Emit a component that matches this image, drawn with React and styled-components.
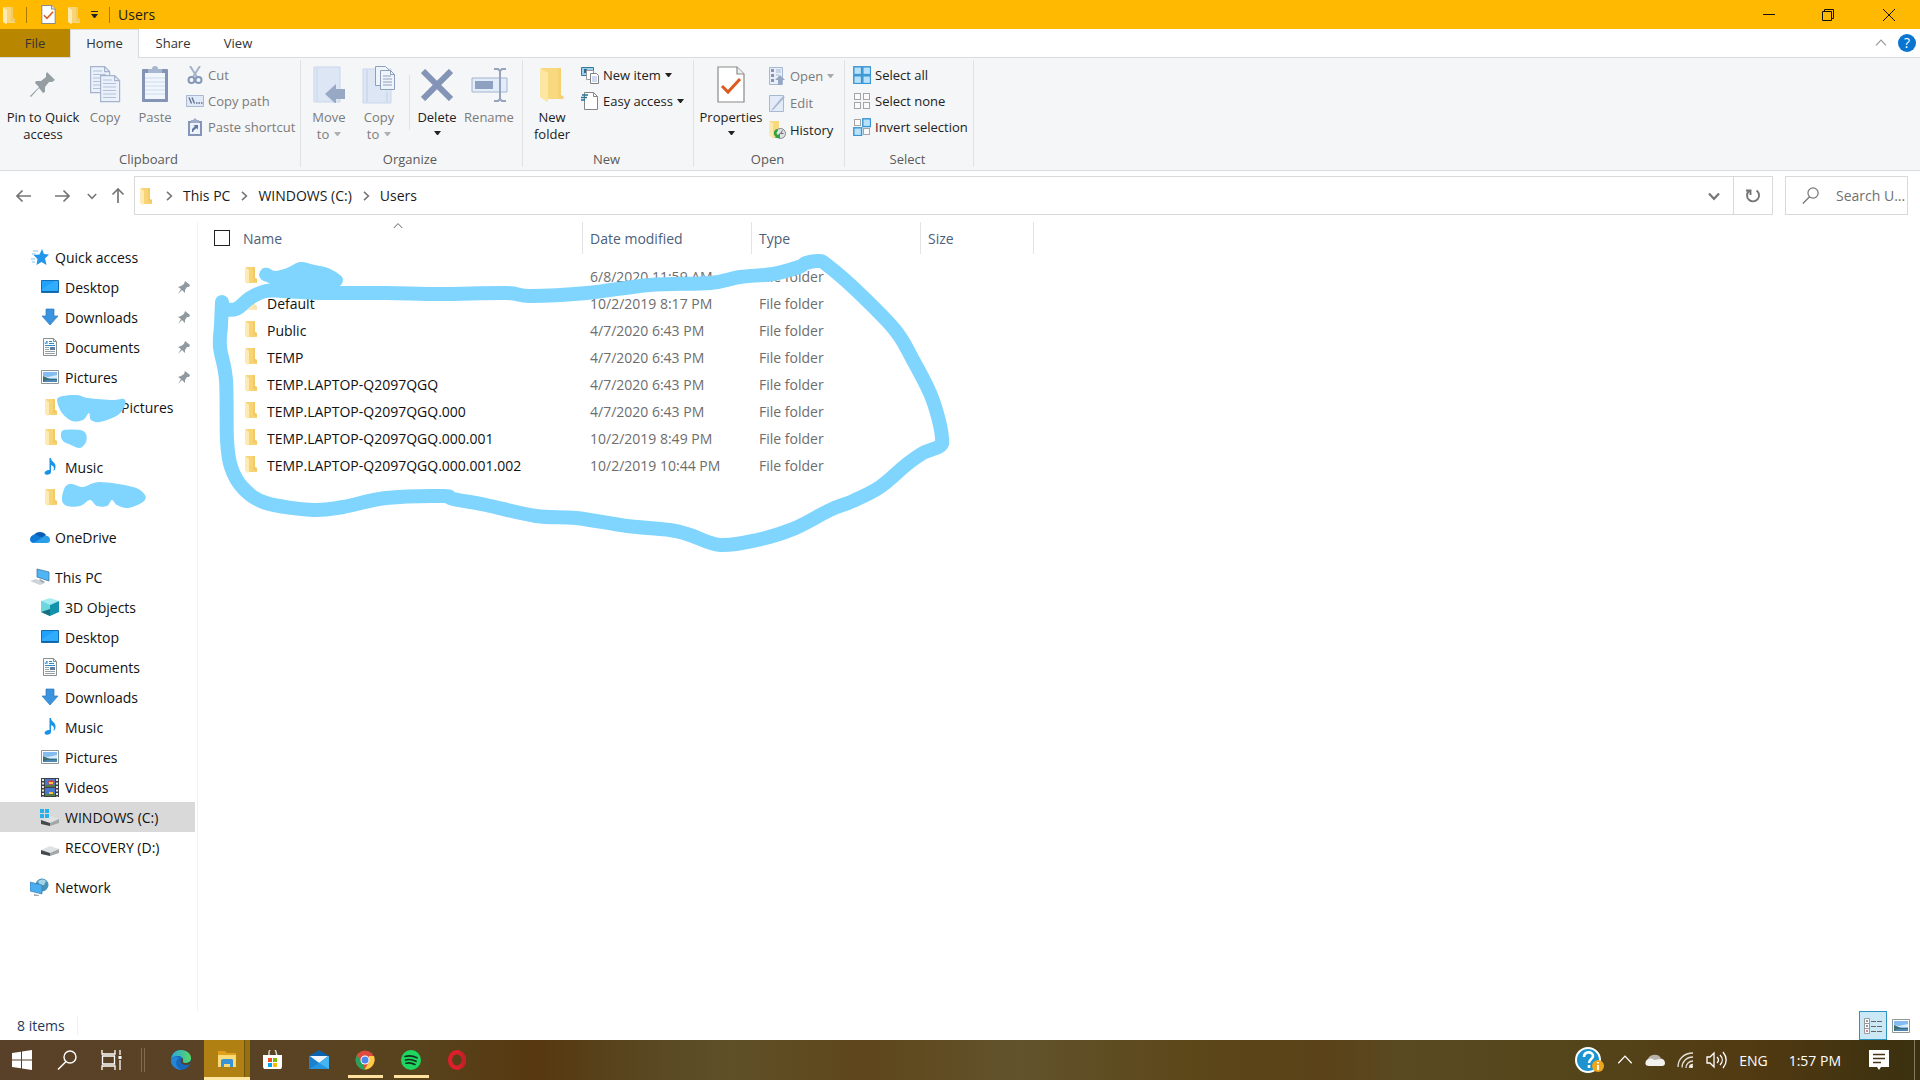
import React from 'react'
import styled, { createGlobalStyle } from 'styled-components';

const GlobalStyle = createGlobalStyle`
  * {
    box-sizing: border-box;
  }
  body {
    margin: 0;
    background: #fff;
    color: #1a1a1a;
    font-family: "Open Sans", "Noto Sans", sans-serif;
    font-size: 14px;
  }
  button, input {
    font: inherit;
    color: inherit;
    border: 0;
    padding: 0;
    background: none;
  }
  a {
    color: inherit;
    text-decoration: none;
  }
  svg {
    display: block;
    flex: none;
  }
`;

/* ---------- icons ---------- */

const Svg = ({ w, h = w, children }) => (
  <svg width={w} height={h} viewBox={`0 0 ${w} ${h}`} fill="none" aria-hidden="true">{children}</svg>
)

const Folder = () => (
  <Svg w={13} h={18}>
    <path d="M2 1h9v11l2 1v4H4z" fill="#f7d476" />
    <path d="M9 1h2v11l2 1v3l-4-1z" fill="#f2cb66" />
    <path d="M1 1l4 3v13l-1 1-3-2z" fill="#fdebb3" />
  </Svg>
)

const BigFolder = () => (
  <Svg w={26} h={36}>
    <path d="M2 1h20v27l3 2-1 2H8z" fill="#f8d97f" />
    <path d="M22 1v27l3 2-1 2h-5V1z" fill="#f3cf6c" opacity=".6" />
    <path d="M1 1l8 5v28l-1 1-7-5z" fill="#fbe6a4" />
  </Svg>
)

const Caret = ({ color = '#222' }) => (
  <Svg w={7} h={4}><path d="M0 0h7L4 4H3z" fill={color} /></Svg>
)

const Chevron = ({ dir = 'right', color = '#777', size = 10, weight = 1.6 }) => {
  const turn = { right: 0, down: 90, up: -90 }[dir]
  return (
    <Svg w={size}>
      <path
        d={`M${size * 0.3} ${size * 0.08}L${size * 0.74} ${size / 2}L${size * 0.3} ${size * 0.92}`}
        stroke={color} strokeWidth={weight} transform={`rotate(${turn} ${size / 2} ${size / 2})`}
      />
    </Svg>
  )
}

const Arrow = ({ turn = 0 }) => (
  <Svg w={16}>
    <path d="M15 8H1M6.500 2.500L1 8l5.500 5.500" stroke="#757575" strokeWidth="1.700" transform={`rotate(${turn} 8 8)`} />
  </Svg>
)

const SmallPin = () => (
  <Svg w={14} h={14}>
    <path d="M8 1l5 4-1 2-2 0-2 3v3l-3-3-4 4 3-5-3-2 3-1 3-2z" fill="#8f999f" />
  </Svg>
)

const BigPin = () => (
  <Svg w={26} h={27}>
    <path d="M17 1l8 8-3 2-3 0-4 5 0 5-2 1-4-5-8 9-1-1 9-9-4-4 1-2 5 0 5-4 0-3z" fill="#959ea2" />
  </Svg>
)

const CheckDoc = ({ big }) => (
  <svg width={big ? 28 : 15} height={big ? 37 : 19} viewBox="0 0 28 37" fill="none" aria-hidden="true">
    <path d="M1 1h19l7 7v28H1z" fill="#fff" stroke="#8a8a8a" strokeWidth={big ? 1.2 : 2} />
    <path d="M20 1v7h7" fill="#eee" stroke="#8a8a8a" strokeWidth={big ? 1.2 : 2} />
    <path d="M5 20l6 6 12-13" stroke="#dc5a1e" strokeWidth="3" />
  </svg>
)

const Sheet = ({ x, y }) => (
  <g transform={`translate(${x} ${y})`}>
    <path d="M.6.600h14l5 5v21H.6z" fill="#eaf1fa" stroke="#a5b4cd" strokeWidth="1.200" />
    <path d="M14.600.600v5h5" stroke="#a5b4cd" strokeWidth="1.200" />
    <path d="M3 5h9M3 8.500h13M3 12h13M3 15.500h13M3 19h13M3 22.500h13" stroke="#b3c1d8" />
  </g>
)

const CopyIcon = () => <Svg w={31} h={37}><Sheet x={0} y={0} /><Sheet x={10} y={9} /></Svg>

const PasteIcon = () => (
  <Svg w={28} h={37}>
    <rect x="1" y="3" width="26" height="33" rx="1" fill="#8394b5" />
    <path d="M4 7h20v26H4z" fill="#f1f5fc" />
    <path d="M4 12h20M4 16h20M4 20h20M4 24h20M4 28h20" stroke="#cfdaed" />
    <path d="M7 3h4a3 3 0 0 1 6 0h4v4H7z" fill="#a9b6cf" />
  </Svg>
)

const CutIcon = () => (
  <Svg w={18}>
    <path d="M4 0l7 11M14 0L7 11" stroke="#a5b3cb" strokeWidth="2" />
    <ellipse cx="5.500" cy="14" rx="3" ry="3" stroke="#8698b8" strokeWidth="2" />
    <ellipse cx="12.500" cy="14" rx="3" ry="3" stroke="#8698b8" strokeWidth="2" />
  </Svg>
)

const CopyPathIcon = () => (
  <Svg w={18}>
    <path d="M.5 3.500h17v11H.5z" fill="#dfe9f7" stroke="#a9b9d1" />
    <path d="M3 5.500l2.500 6M6 5.500l2.500 6" stroke="#5d708f" strokeWidth="1.300" />
    <path d="M10 11h1.500M12.500 11H14M15 11h1.500" stroke="#5d708f" strokeWidth="1.500" />
  </Svg>
)

const ShortcutIcon = () => (
  <Svg w={18}>
    <path d="M2 3h14v15H2z" fill="#8496b7" /><path d="M4 5h10v11H4z" fill="#eef3fb" />
    <path d="M5 2h2l2-2 2 2h2v3H5z" fill="#9fadc8" />
    <path d="M6 14V11l3-3-2-1h5v5l-1-2-3 2-1 2z" fill="#5f789f" />
  </Svg>
)

const MoveIcon = () => (
  <Svg w={32} h={37}>
    <path d="M1 1h26v35H1z" fill="#dce6f4" stroke="#cbd7ea" />
    <path d="M4 2v33" stroke="#cbd7ea" />
    <path d="M12 28l11-10v5h9v10h-9v5z" fill="#98a9c6" />
  </Svg>
)

const CopyToIcon = () => (
  <Svg w={34} h={38}>
    <path d="M1 3h28v34H1z" fill="#dce6f4" stroke="#cbd7ea" />
    <path d="M5 4v32M25 26v10" stroke="#c3d0e6" />
    <path d="M13.500.500h10l4 4v15h-14z" fill="#eff4fb" stroke="#8fa0be" />
    <path d="M18.500 4.500h10l4 4v15h-14z" fill="#eff4fb" stroke="#8fa0be" />
    <path d="M28.500 4.500v4h4M21 10h8M21 13h9M21 16h9M21 19h9" stroke="#8fa0be" />
  </Svg>
)

const DeleteIcon = () => (
  <Svg w={32} h={32}><path d="M2 2l28 28M30 2L2 30" stroke="#8394b6" strokeWidth="6" /></Svg>
)

const RenameIcon = () => (
  <Svg w={37} h={34}>
    <path d="M1 10h35v14H1z" fill="#e3ecf9" stroke="#a4b4d0" />
    <path d="M4 13h18v8H4z" fill="#8fa1c1" />
    <path d="M23 1h4l2 2 2-2h4M29 2v30M23 33h4l2-2 2 2h4" stroke="#95a3bd" strokeWidth="2" />
  </Svg>
)

const NewItemIcon = () => (
  <Svg w={18}>
    <path d="M.5 1.500h12v8H.5z" fill="#9ed0ec" stroke="#35799c" />
    <path d="M3 3h3v4H3z" fill="#2c6a8e" />
    <path d="M5.500 4.500h7v9h-7z" fill="#fff" stroke="#9a9a9a" />
    <path d="M9.500 7.500h6l2 2v8h-8z" fill="#fff" stroke="#808080" />
    <path d="M11 11h5M11 13h5M11 15h5" stroke="#9db6dd" />
  </Svg>
)

const EasyAccessIcon = () => (
  <Svg w={18}>
    <path d="M3.500.500h9l4 4v13h-13z" fill="#fff" stroke="#858585" />
    <path d="M12.500.500v4h4" stroke="#858585" />
    <path d="M1 3h6M0 5.500h6M0 8h4" stroke="#2a6f99" strokeWidth="1.300" />
  </Svg>
)

const OpenIcon = () => (
  <Svg w={18}>
    <path d="M1.500.500h13v17h-13z" fill="#e8effa" stroke="#a9b8d1" />
    <path d="M3 2h3v3H3zM3 7h3v3H3zM3 12h3v3H3z" fill="#8295b7" />
    <path d="M8 3h5M8 5h5M8 8h3" stroke="#a9b8d1" />
    <path d="M12 8l5 5h-3v5h-4v-5H7z" fill="#97a7c3" />
  </Svg>
)

const EditIcon = () => (
  <Svg w={18}>
    <path d="M1.500 1.500h14v16h-14z" fill="#e3ebf8" stroke="#a9b8d1" />
    <path d="M4 15L15 2l2 1L6 15l-3 2z" fill="#a9b8d1" />
  </Svg>
)

const HistoryIcon = () => (
  <Svg w={18}>
    <path d="M1 0h10v14l-6 3-4-3z" fill="#f8d97f" /><path d="M1 0l4 2v15l-4-3z" fill="#fbe9b0" />
    <circle cx="12.500" cy="12.500" r="5" fill="#dfe4e8" stroke="#808588" />
    <path d="M12.500 12.500l2-3M12.500 12.500h3" stroke="#666" />
    <path d="M9 8c-4 1-4 6-1 8l-2 1h6v-5l-2 2c-2-1-2-3 0-4z" fill="#33a13d" />
  </Svg>
)

// on: which of the four squares are filled
const SelectIcon = ({ on }) => (
  <Svg w={18}>
    {[[0, 0], [1, 0], [0, 1], [1, 1]].map(([c, r], i) => {
      const filled = on.includes(i)
      const pad = filled ? 0.8 : 1.5
      const size = filled ? 7.8 : 6
      return (
        <rect
          key={i} x={c * 9 + pad} y={r * 9 + pad} width={size} height={size}
          fill={filled ? '#b8e1fb' : '#fafafa'} stroke={filled ? '#3894d2' : '#a5a5a5'} strokeWidth={filled ? 1.4 : 1}
        />
      )
    })}
  </Svg>
)

const StarIcon = () => (
  <Svg w={18}>
    <path d="M11 1l2 5 5 .5-4 4 1.500 6.500-5-3-5 3 1-6-4-4 6-.5z" fill="#2196ea" />
    <path d="M2 3h5M1 6h4M0 11h4M1 14h3" stroke="#7cc4f5" />
  </Svg>
)

const DesktopIcon = () => (
  <Svg w={18}>
    <path d="M.5 2.500h17v12H.5z" fill="#1ea2fd" stroke="#156dad" />
    <path d="M1 11L14 3h3v11H1z" fill="#31adff" /><path d="M1 13.500h16" stroke="#0e65a8" />
  </Svg>
)

const DownloadIcon = () => (
  <Svg w={18}><path d="M5 1h8v7h4l-8 9-8-9h4z" fill="#3a93df" stroke="#2f78ba" strokeWidth=".7" /></Svg>
)

const DocumentIcon = () => (
  <Svg w={18}>
    <path d="M2.500.500h10l3 3v14h-13z" fill="#fcfcfc" stroke="#8a8f92" />
    <path d="M12.500.500v3h3" stroke="#8a8f92" />
    <path d="M4 6l2-3v3M8 3.500h3M8 5.500h5M4 7.500h10" stroke="#2b8bcf" />
    <path d="M4 9.500h4M4 11.500h4M4 13.500h10M4 15.500h10" stroke="#98a0a4" />
    <path d="M9 9h5v3H9z" fill="#5c7fa2" />
  </Svg>
)

const PictureIcon = () => (
  <Svg w={18}>
    <path d="M.5 2.500h17v13H.5z" fill="#fff" stroke="#8e9699" />
    <path d="M2 4h14v10H2z" fill="#86bdf0" />
    <path d="M2 8l5 1 9-2v3H2z" fill="#dceefb" />
    <path d="M2 8l7 3h7v3H2z" fill="#3f6f70" /><path d="M5 12h11v2H2z" fill="#4d87b5" />
  </Svg>
)

const MusicIcon = () => (
  <Svg w={18}>
    <path d="M8.500 0H10c0 4 5 4 4.500 9 0 2-1 3-2 4 1-4 0-5-2.500-6v7c0 3-6 4-6.500 1 0-2 3-3.500 5-3z" fill="#1a93e6" />
  </Svg>
)

const CubeIcon = () => (
  <Svg w={18}>
    <path d="M9 0l9 3-9 4-9-4z" fill="#a5ebf0" /><path d="M0 3l9 4v11l-9-4z" fill="#42c5d3" />
    <path d="M18 3L9 7v11l9-4z" fill="#1393ab" /><path d="M0 14l9-4v8z" fill="#176f7f" />
    <path d="M0 3l9 4v4l-9 3z" fill="#6bd8e0" />
  </Svg>
)

const VideoIcon = () => (
  <Svg w={18} h={19}>
    <path d="M0 0h18v19H0z" fill="#3c3f45" /><path d="M4 1h10v8H4zM4 10h10v8H4z" fill="#4b78cf" />
    <path d="M7 3l4-1 3 2-3 3-3 1z" fill="#d4453a" /><path d="M8 4h4v2H8zM8 14h4v2H8z" fill="#f2c443" />
    <path d="M4 7h10v2H4zM4 16h10v2H4z" fill="#557a46" />
    <path d="M2 1v18M16 1v18" stroke="#e8e8e8" strokeWidth="2" strokeDasharray="2 1.500" />
  </Svg>
)

const PcIcon = () => (
  <Svg w={20} h={18}>
    <path d="M7 1l12 3v9L7 9z" fill="#4eb5f7" stroke="#45799c" strokeWidth=".8" />
    <path d="M0 13l6-2 9 4-5 2z" fill="#ced3d8" /><path d="M10 11l5 3-2 1-4-3z" fill="#9ca5ab" />
  </Svg>
)

const CloudIcon = () => (
  <Svg w={20} h={14}>
    <path d="M4 5a7 6 0 0 1 12 0l-3 3-9-1z" fill="#0b5cb4" />
    <path d="M0 9a5 5 0 0 1 7-4l6 4-9 4a4 4 0 0 1-4-4z" fill="#0f7ad5" />
    <path d="M13 7a4 4 0 0 1 7 3 3 3 0 0 1-3 3H4z" fill="#2b9ee8" />
  </Svg>
)

const DriveIcon = ({ system }) => (
  <Svg w={20} h={18}>
    <path d="M1 12l9-4 9 3-9 4z" fill="#dfe1e3" />
    <path d="M1 12l9 3v3l-9-2z" fill="#45494b" /><path d="M19 11l-9 4v3l9-3z" fill="#a2a7aa" />
    {system && <path d="M0 1h4v4H0zM5 1h4v4H5zM0 6h4v4H0zM5 6h4v4H5z" fill="#22b3ea" />}
  </Svg>
)

const NetworkIcon = () => (
  <Svg w={20} h={18}>
    <circle cx="12" cy="7" r="6.500" fill="#4794bb" />
    <path d="M8 3c3-2 6-2 8 0l-2 4-4 1z" fill="#a5d4e6" />
    <path d="M0 4l12 3v9L0 13z" fill="#49adf0" stroke="#2b6f9f" strokeWidth=".6" />
    <path d="M4 16l5 1v1H4z" fill="#a7adb1" />
  </Svg>
)

const DetailsIcon = () => (
  <Svg w={20} h={18}>
    <path d="M1.500 1.500h5v15h-5zM1.500 6.500h5M1.500 11.500h5" fill="#fff" stroke="#9a9a9a" />
    <path d="M3 3.500h2v1H3zM3 8.500h2v1H3z" fill="#333" /><path d="M3 13.500h2v1H3z" fill="#a22" />
    <path d="M8 4.500h5M14 4.500h5M8 9.500h5M14 9.500h5M8 14.500h5M14 14.500h5" stroke="#666" />
  </Svg>
)

const SearchGlass = ({ size = 17, color = '#757575' }) => (
  <svg width={size} height={size} viewBox="0 0 20 20" fill="none" aria-hidden="true">
    <circle cx="13" cy="7" r="6" stroke={color} strokeWidth="1.400" />
    <path d="M9 11.500L1 19.500" stroke={color} strokeWidth="1.500" />
  </svg>
)

/* ---------- taskbar icons ---------- */

const WindowsLogo = () => (
  <Svg w={20}><path d="M0 3l9-1.300V9.500H0zM10 1.500L20 0v9.500H10zM0 10.500h9v7.800L0 17zM10 10.500h10V20l-10-1.500z" fill="#fff" /></Svg>
)
const TaskViewIcon = () => (
  <Svg w={22} h={20}>
    <path d="M1 0v4h13V0M1 20v-4h13v4M1.500 6h12v8h-12zM19 0v5M19 10v10" stroke="#fff" strokeWidth="1.300" />
    <path d="M17.500 6h3v3h-3z" fill="#fff" />
  </Svg>
)
const EdgeIcon = () => (
  <Svg w={20}>
    <defs>
      <linearGradient id="edgeTop" x1="0" y1="0" x2="1" y2="0"><stop stopColor="#2aa7e2" /><stop offset="1" stopColor="#57d863" /></linearGradient>
    </defs>
    <circle cx="10" cy="10" r="10" fill="#1668bf" />
    <path d="M0 9C1 3 5 0 10 0c6 0 10 4 10 8 0 4-3 5-6 5-2 0-3-1-2-2 1-3-2-5-5-5-3 0-6 1-7 3z" fill="url(#edgeTop)" />
    <path d="M8 8c-5 3-3 10 3 12-7 0-12-6-11-10 1-3 5-4 8-2z" fill="#2486d6" />
    <path d="M11 8c-3 3-1 7 4 7 2 0 4-1 5-2v-2c-2 2-4 2-6 2-2 0-3-1-2-2 0-1 0-2-1-3z" fill="#573f22" />
  </Svg>
)
const ExplorerIcon = () => (
  <Svg w={18} h={18}>
    <path d="M0 1h7l2 2h9v3H0z" fill="#e0a01d" /><path d="M0 5h18v12H0z" fill="#fbdb78" />
    <path d="M3 17v-7l2-1h9l1 1v7h-3v-3H6v3z" fill="#3a93d4" />
  </Svg>
)
const StoreIcon = () => (
  <Svg w={20}>
    <path d="M6 6V3a3 3 0 0 1 7-1l1 4" stroke="#ddd" strokeWidth="1.400" />
    <path d="M0 5h19v12l-1 2H1l-1-2z" fill="#fff" />
    <path d="M5 8h4v4H5z" fill="#f25022" /><path d="M10 8h4v4h-4z" fill="#7fba00" />
    <path d="M5 13h4v4H5z" fill="#00a4ef" /><path d="M10 13h4v4h-4z" fill="#ffb900" />
  </Svg>
)
const MailIcon = () => (
  <Svg w={20}>
    <path d="M0 6l10-6 10 6z" fill="#0b62ae" /><path d="M0 6h20v13H0z" fill="#2796e0" />
    <path d="M1 6h18l-9 7z" fill="#f1f5f9" /><path d="M0 6l10 7L0 19z" fill="#1b80cf" /><path d="M20 6l-10 7 10 6z" fill="#45b4f2" />
  </Svg>
)
const ChromeIcon = () => (
  <Svg w={20}>
    <circle cx="10" cy="10" r="9.500" fill="#dd4b3e" />
    <path d="M2 5l6 9 2 6A10 10 0 0 1 2 5z" fill="#26a25b" /><path d="M19 6a10 10 0 0 1-9.500 13.500L14 12V6z" fill="#fecd45" />
    <circle cx="10" cy="10" r="4.500" fill="#fff" /><circle cx="10" cy="10" r="3.500" fill="#4f86ec" />
  </Svg>
)
const SpotifyIcon = () => (
  <Svg w={20}>
    <circle cx="10" cy="10" r="10" fill="#1ed760" />
    <path d="M4 6.500c4-1.200 8-.8 12 1.300M4.500 10c3.500-1 7-.5 10.500 1.300M5 13.200c3-.8 6-.4 9 1.200" stroke="#15301f" strokeWidth="1.700" strokeLinecap="round" />
  </Svg>
)
const OperaIcon = () => (
  <Svg w={20}>
    <ellipse cx="10" cy="10" rx="7" ry="7.800" stroke="#dd1f2b" strokeWidth="4.200" />
    <path d="M10 .2c5 0 9 4 9 9.800s-4 9.800-9 9.800c4-1 5-5 5-9.800S14 1 10 .2z" fill="#c4202a" />
  </Svg>
)
const HelpBadge = () => (
  <Svg w={30} h={28}>
    <circle cx="13" cy="14" r="12" fill="#1b94cf" stroke="#fff" strokeWidth="2" />
    <path d="M9 11c0-6 9-6 9-1 0 3-4 3-4 7M14 19v3" stroke="#fff" strokeWidth="2.600" />
    <circle cx="23" cy="20" r="6" fill="#eea71c" /><path d="M23 19v5M23 16v1.500" stroke="#fff" strokeWidth="1.800" />
  </Svg>
)
const TrayCloud = () => (
  <Svg w={20} h={14}>
    <path d="M3 6a7 6 0 0 1 13-1l-3 5z" fill="#b9b2a8" />
    <path d="M1 8c2-3 6-3 8-1l6-1c3-1 5 2 5 4s-1 3-3 3H4c-4 0-4-3-3-5z" fill="#f4f2ef" />
  </Svg>
)
const WifiIcon = () => (
  <Svg w={17} h={17}>
    <path d="M1 15C1 7 7 1 16 1M5 15.500C5 10 9 5 16 5M9 16c0-4 3-7 7-7M12.500 16c0-2 1-3.500 3.500-3.500" stroke="#e6e0d8" strokeWidth="1.300" />
    <circle cx="14.500" cy="14.500" r="1.500" fill="#fff" />
  </Svg>
)
const VolumeIcon = () => (
  <Svg w={21} h={18}>
    <path d="M1 6h3l4-4v14l-4-4H1z" stroke="#fff" strokeWidth="1.300" />
    <path d="M11 6c2 2 2 4 0 6M14 4c3 3 3 7 0 10M17 1c4 5 4 11 0 16" stroke="#fff" strokeWidth="1.300" />
  </Svg>
)
const NoteIcon = () => (
  <Svg w={20} h={20}>
    <path d="M0 0h20v17h-8l-2 3-2-3H0z" fill="#fff" /><path d="M4 4.500h12M4 8.500h12M4 12.500h8" stroke="#4a3612" strokeWidth="1.300" />
  </Svg>
)

/* ---------- data ---------- */

const quickAccess = [
  { label: 'Desktop', icon: <DesktopIcon />, pinned: true },
  { label: 'Downloads', icon: <DownloadIcon />, pinned: true },
  { label: 'Documents', icon: <DocumentIcon />, pinned: true },
  { label: 'Pictures', icon: <PictureIcon />, pinned: true },
  { label: 'Pictures', icon: <Folder />, indent: true },
  { label: '', icon: <Folder /> },
  { label: 'Music', icon: <MusicIcon /> },
  { label: '', icon: <Folder /> },
]

const thisPc = [
  { label: '3D Objects', icon: <CubeIcon /> },
  { label: 'Desktop', icon: <DesktopIcon /> },
  { label: 'Documents', icon: <DocumentIcon /> },
  { label: 'Downloads', icon: <DownloadIcon /> },
  { label: 'Music', icon: <MusicIcon /> },
  { label: 'Pictures', icon: <PictureIcon /> },
  { label: 'Videos', icon: <VideoIcon /> },
  { label: 'WINDOWS (C:)', icon: <DriveIcon system />, selected: true },
  { label: 'RECOVERY (D:)', icon: <DriveIcon /> },
]

const files = [
  { name: '', date: '6/8/2020 11:59 AM' },
  { name: 'Default', date: '10/2/2019 8:17 PM', hidden: true },
  { name: 'Public', date: '4/7/2020 6:43 PM' },
  { name: 'TEMP', date: '4/7/2020 6:43 PM' },
  { name: 'TEMP.LAPTOP-Q2097QGQ', date: '4/7/2020 6:43 PM' },
  { name: 'TEMP.LAPTOP-Q2097QGQ.000', date: '4/7/2020 6:43 PM' },
  { name: 'TEMP.LAPTOP-Q2097QGQ.000.001', date: '10/2/2019 8:49 PM' },
  { name: 'TEMP.LAPTOP-Q2097QGQ.000.001.002', date: '10/2/2019 10:44 PM' },
]

const apps = [
  { name: 'Edge', icon: <EdgeIcon /> },
  { name: 'File Explorer', icon: <ExplorerIcon />, active: true },
  { name: 'Store', icon: <StoreIcon /> },
  { name: 'Mail', icon: <MailIcon /> },
  { name: 'Chrome', icon: <ChromeIcon />, running: true },
  { name: 'Spotify', icon: <SpotifyIcon />, running: true },
  { name: 'Opera', icon: <OperaIcon /> },
]

/* ---------- marker strokes ---------- */

const loop = [
  [222, 302], [221, 325], [220, 347], [226, 380], [227, 440], [231, 467], [243, 488], [266, 503], [313, 510],
  [343, 507], [386, 498], [443, 496], [453, 499], [486, 505], [536, 516], [576, 518], [627, 526], [670, 530],
  [690, 535], [720, 545], [757, 540], [793, 529], [830, 510], [853, 501], [880, 487], [906, 465], [923, 453],
  [940, 446], [942, 438], [938, 417], [930, 393], [913, 360], [895, 330], [857, 291], [827, 265], [818, 261],
  [806, 263], [799, 267], [773, 274], [740, 277], [710, 283], [650, 285], [587, 293], [530, 296], [506, 293],
  [440, 294], [386, 293], [326, 293], [283, 291], [266, 291], [250, 298], [236, 309], [222, 309],
]

const blobs = [
  [[259, 275], [262, 269], [268, 268], [275, 271], [287, 268], [300, 262], [315, 265], [328, 268], [340, 275], [343, 280], [340, 286], [330, 292], [270, 292], [270, 284], [262, 280]],
  [[57, 400], [63, 396], [77, 395], [88, 398], [113, 400], [124, 399], [125, 405], [118, 415], [100, 422], [91, 420], [89, 413], [83, 420], [72, 421], [62, 413]],
  [[61, 435], [64, 430], [80, 430], [86, 434], [86, 442], [80, 448], [71, 445], [63, 441]],
  [[62, 500], [65, 487], [72, 484], [83, 487], [100, 482], [133, 487], [145, 495], [143, 502], [128, 508], [117, 505], [112, 500], [107, 506], [97, 506], [90, 500], [80, 506], [67, 506]],
]

// Catmull-Rom spline through all points
const spline = (pts, closed) => {
  const n = pts.length
  const at = (i) => closed ? pts[(i + n) % n] : pts[Math.max(0, Math.min(n - 1, i))]
  let d = `M${pts[0]}`
  for (let i = 0; i < (closed ? n : n - 1); i++) {
    const [a, b, c, e] = [at(i - 1), at(i), at(i + 1), at(i + 2)]
    d += `C${b[0] + (c[0] - a[0]) / 6} ${b[1] + (c[1] - a[1]) / 6} ${c[0] - (e[0] - b[0]) / 6} ${c[1] - (e[1] - b[1]) / 6} ${c[0]} ${c[1]}`
  }
  return d
}

const Marker = () => (
  <MarkerLayer width="1000" height="600" viewBox="0 0 1000 600" aria-hidden="true">
    <path d={spline(loop)} fill="none" stroke="#80d5ff" strokeWidth="14" strokeLinecap="round" strokeLinejoin="round" />
    {blobs.map((b, i) => <path key={i} d={spline(b, true)} fill="#80d5ff" />)}
  </MarkerLayer>
)

/* ---------- parts ---------- */

function BigButton({ icon, lines, width, caret, disabled }) {
  return (
    <BigButtonStyled $width={width} $disabled={disabled}>
      <span className="picture">{icon}</span>
      {lines.map((line, i) => (
        <span className="line" key={line}>
          {line}
          {caret === 'inline' && i === lines.length - 1 && <Caret color="#b0b0b0" />}
        </span>
      ))}
      {caret === 'below' && <span className="below"><Caret /></span>}
    </BigButtonStyled>
  )
}

function SmallButton({ icon, label, caret, disabled }) {
  return (
    <SmallButtonStyled $disabled={disabled}>
      {icon}
      <span>{label}</span>
      {caret && <Caret color={disabled ? '#aaa' : '#222'} />}
    </SmallButtonStyled>
  )
}

function RibbonGroup({ title, width, children }) {
  return (
    <Group $width={width}>
      <div className="tools">{children}</div>
      <div className="title">{title}</div>
    </Group>
  )
}

function TreeItem({ item, root }) {
  return (
    <TreeItemStyled href="#" $root={root} $selected={item.selected}>
      <span className="icon">{item.icon}</span>
      {item.indent && <Hidden />}
      <span className="label">{item.label}</span>
      {item.pinned && <SmallPin />}
    </TreeItemStyled>
  )
}

function App() {
  return (
    <Page>
      <GlobalStyle />
      <TitleBar>
        <Folder />
        <Bar />
        <CheckDoc />
        <Folder />
        <Svg w={7} h={7}><path d="M0 .5h7" stroke="#222" /><path d="M0 3h7L4 7H3z" fill="#222" /></Svg>
        <Bar />
        <h1>Users</h1>
        <WindowButtons>
          <button aria-label="Minimize"><Svg w={12}><path d="M0 5.500h12" stroke="#111" /></Svg></button>
          <button aria-label="Restore"><Svg w={12}><path d="M.5 2.500h9v9h-9zM2.500 2.500v-2h9v9h-2" stroke="#111" /></Svg></button>
          <button aria-label="Close"><Svg w={12}><path d="M0 0l12 12M12 0L0 12" stroke="#111" /></Svg></button>
        </WindowButtons>
      </TitleBar>

      <Tabs>
        <Tab $width={70} $file>File</Tab>
        <Tab $width={69} $active>Home</Tab>
        <Tab $width={68}>Share</Tab>
        <Tab $width={62}>View</Tab>
        <div className="right">
          <Chevron dir="up" size={12} color="#999" weight={1.2} />
          <HelpButton>?</HelpButton>
        </div>
      </Tabs>

      <Ribbon>
        <RibbonGroup title="Clipboard" width={301}>
          <BigButton width={86} icon={<BigPin />} lines={['Pin to Quick', 'access']} />
          <BigButton width={38} icon={<CopyIcon />} lines={['Copy']} disabled />
          <BigButton width={62} icon={<PasteIcon />} lines={['Paste']} disabled />
          <SmallColumn>
            <SmallButton icon={<CutIcon />} label="Cut" disabled />
            <SmallButton icon={<CopyPathIcon />} label="Copy path" disabled />
            <SmallButton icon={<ShortcutIcon />} label="Paste shortcut" disabled />
          </SmallColumn>
        </RibbonGroup>
        <RibbonGroup title="Organize" width={222}>
          <BigButton width={56} icon={<MoveIcon />} lines={['Move', 'to']} caret="inline" disabled />
          <BigButton width={44} icon={<CopyToIcon />} lines={['Copy', 'to']} caret="inline" disabled />
          <Divider />
          <BigButton width={54} icon={<DeleteIcon />} lines={['Delete']} caret="below" />
          <BigButton width={50} icon={<RenameIcon />} lines={['Rename']} disabled />
        </RibbonGroup>
        <RibbonGroup title="New" width={171}>
          <BigButton width={58} icon={<BigFolder />} lines={['New', 'folder']} />
          <SmallColumn>
            <SmallButton icon={<NewItemIcon />} label="New item" caret />
            <SmallButton icon={<EasyAccessIcon />} label="Easy access" caret />
          </SmallColumn>
        </RibbonGroup>
        <RibbonGroup title="Open" width={151}>
          <BigButton width={74} icon={<CheckDoc big />} lines={['Properties']} caret="below" />
          <SmallColumn $loose>
            <SmallButton icon={<OpenIcon />} label="Open" caret disabled />
            <SmallButton icon={<EditIcon />} label="Edit" disabled />
            <SmallButton icon={<HistoryIcon />} label="History" />
          </SmallColumn>
        </RibbonGroup>
        <RibbonGroup title="Select" width={129}>
          <SmallColumn $first>
            <SmallButton icon={<SelectIcon on={[0, 1, 2, 3]} />} label="Select all" />
            <SmallButton icon={<SelectIcon on={[]} />} label="Select none" />
            <SmallButton icon={<SelectIcon on={[1, 2]} />} label="Invert selection" />
          </SmallColumn>
        </RibbonGroup>
      </Ribbon>

      <AddressRow>
        <NavButtons>
          <button aria-label="Back"><Arrow /></button>
          <button aria-label="Forward"><Arrow turn={180} /></button>
          <button aria-label="Recent locations"><Chevron dir="down" /></button>
          <button aria-label="Up"><Arrow turn={90} /></button>
        </NavButtons>
        <AddressBox>
          <Folder />
          <Crumbs>
            <Chevron /><a href="#">This PC</a>
            <Chevron /><a href="#">WINDOWS (C:)</a>
            <Chevron /><a href="#">Users</a>
          </Crumbs>
          <button className="history" aria-label="Previous locations"><Chevron dir="down" size={12} weight={2.2} /></button>
          <button className="refresh" aria-label="Refresh">
            <Svg w={16}><path d="M11.500 2.500a6 6 0 1 1-7.500.500M1 2.500h4.500v4.500" stroke="#757575" strokeWidth="1.900" /></Svg>
          </button>
        </AddressBox>
        <SearchBox>
          <SearchGlass />
          <input aria-label="Search Users" placeholder="Search U..." />
        </SearchBox>
      </AddressRow>

      <Body>
        <Sidebar>
          <Branch>
            <TreeItem root item={{ label: 'Quick access', icon: <StarIcon /> }} />
            {quickAccess.map((item, i) => <TreeItem key={i} item={item} />)}
          </Branch>
          <Branch><TreeItem root item={{ label: 'OneDrive', icon: <CloudIcon /> }} /></Branch>
          <Branch>
            <TreeItem root item={{ label: 'This PC', icon: <PcIcon /> }} />
            {thisPc.map((item) => <TreeItem key={item.label} item={item} />)}
          </Branch>
          <Branch><TreeItem root item={{ label: 'Network', icon: <NetworkIcon /> }} /></Branch>
        </Sidebar>
        <Files>
          <FileTable>
            <colgroup>
              <col className="name" /><col className="date" /><col className="type" /><col className="size" />
            </colgroup>
            <thead>
              <tr>
                <th>
                  <label><input type="checkbox" aria-label="Select all items" />Name</label>
                  <span className="sort"><Chevron dir="up" size={10} color="#666" weight={1} /></span>
                </th>
                <th>Date modified</th>
                <th>Type</th>
                <th>Size</th>
              </tr>
            </thead>
            <tbody>
              {files.map((file, i) => (
                <FileRow key={i} $hidden={file.hidden}>
                  <td><span className="file"><Folder />{file.name}</span></td>
                  <td>{file.date}</td>
                  <td>File folder</td>
                  <td></td>
                </FileRow>
              ))}
            </tbody>
          </FileTable>
        </Files>
      </Body>

      <StatusBar>
        <span className="count">8 items</span>
        <ViewButton $on aria-label="Details view"><DetailsIcon /></ViewButton>
        <ViewButton aria-label="Large icons view"><PictureIcon /></ViewButton>
      </StatusBar>

      <Taskbar>
        <TaskButton $width={44} aria-label="Start"><WindowsLogo /></TaskButton>
        <TaskButton $width={45} aria-label="Search"><SearchGlass size={20} color="#fff" /></TaskButton>
        <TaskButton $width={46} aria-label="Task view"><TaskViewIcon /></TaskButton>
        <Grip />
        {apps.map((app) => (
          <TaskButton key={app.name} $width={46} aria-label={app.name} $active={app.active} $running={app.running}>{app.icon}</TaskButton>
        ))}
        <Tray>
          <HelpBadge />
          <Chevron dir="up" size={16} color="#fff" weight={1.3} />
          <TrayCloud />
          <WifiIcon />
          <VolumeIcon />
          <span>ENG</span>
          <time>1:57 PM</time>
          <NoteIcon />
        </Tray>
      </Taskbar>
      <Marker />
    </Page>
  )
}

const Page = styled.div`
  position: relative;
  display: flex;
  flex-direction: column;
  min-height: 100vh;
`;

const MarkerLayer = styled.svg`
  position: absolute;
  top: 0;
  left: 0;
  pointer-events: none;
`;

const TitleBar = styled.header`
  display: flex;
  align-items: center;
  gap: 11px;
  height: 29px;
  padding-left: 2px;
  background: #ffb900;

  h1 {
    margin: 0;
    margin-left: -6px;
    font-size: 14px;
    font-weight: 400;
  }
`;

const Bar = styled.span`
  width: 1px;
  height: 16px;
  margin-right: 3px;
  background: #a87a00;
`;

const WindowButtons = styled.div`
  display: flex;
  margin-left: auto;

  button {
    display: grid;
    place-items: center;
    width: 59px;
    height: 29px;
  }
  button:last-child {
    width: 63px;
  }
`;

const Tabs = styled.nav`
  display: flex;
  height: 28px;

  .right {
    display: flex;
    align-items: center;
    gap: 11px;
    margin-left: auto;
    padding-right: 4px;
  }
`;

const Tab = styled.button`
  width: ${(p) => p.$width}px;
  height: ${(p) => (p.$active ? 29 : 28)}px;
  padding-bottom: ${(p) => (p.$active ? 2 : 0)}px;
  font-size: 13px;
  color: #333;
  background: ${(p) => (p.$file ? '#b98600' : p.$active ? '#f5f6f7' : 'none')};
  border: solid #dadbdc;
  border-width: ${(p) => (p.$active ? '1px 1px 0' : '0')};
  z-index: 1;
`;

const HelpButton = styled.button`
  width: 18px;
  height: 18px;
  line-height: 18px;
  border-radius: 50%;
  background: #0a74d1;
  color: #fff;
`;

const Ribbon = styled.section`
  display: flex;
  height: 114px;
  padding-top: 2px;
  background: #f5f6f7;
  border-top: 1px solid #dadbdc;
  border-bottom: 1px solid #dadbdc;
`;

const Group = styled.div`
  display: flex;
  flex-direction: column;
  width: ${(p) => p.$width}px;
  height: 107px;
  border-right: 1px solid #e1e2e3;

  .tools {
    display: flex;
    flex: 1;
  }
  .title {
    padding-right: 3px;
    line-height: 15px;
    font-size: 13px;
    text-align: center;
    color: #5a5a5a;
  }
`;

const BigButtonStyled = styled.button`
  display: flex;
  flex-direction: column;
  align-items: center;
  width: ${(p) => p.$width}px;
  font-size: 13px;
  white-space: nowrap;
  color: ${(p) => (p.$disabled ? '#7b7b7b' : '#222')};

  .picture {
    display: grid;
    place-items: center;
    height: 48px;
    padding-top: 1px;
  }
  .line {
    display: flex;
    align-items: center;
    gap: 5px;
    height: 17px;
  }
  .below {
    padding-top: 6px;
  }
`;

const SmallColumn = styled.div`
  display: grid;
  align-content: start;
  grid-auto-rows: ${(p) => (p.$loose ? 27 : 26)}px;
  padding-top: 2px;
  padding-left: ${(p) => (p.$first ? 8 : 0)}px;
`;

const SmallButtonStyled = styled.button`
  display: flex;
  align-items: center;
  gap: 4px;
  font-size: 13px;
  white-space: nowrap;
  color: ${(p) => (p.$disabled ? '#7b7b7b' : '#222')};
`;

const Divider = styled.span`
  width: 1px;
  height: 55px;
  margin: 15px 0 0 8px;
  background: #e1e2e3;
`;

const AddressRow = styled.div`
  display: flex;
  height: 51px;
  padding: 5px 12px 7px 0;
`;

const NavButtons = styled.div`
  display: grid;
  grid-template-columns: 48px 28px 32px 26px;

  button {
    display: grid;
    place-items: center;
  }
  button:last-child {
    place-items: center start;
    padding-left: 2px;
  }
`;

const AddressBox = styled.div`
  display: flex;
  flex: 1;
  align-items: center;
  padding-left: 4px;
  border: 1px solid #d9d9d9;

  .history {
    display: grid;
    place-items: center;
    width: 38px;
    height: 37px;
    margin-left: auto;
  }
  .refresh {
    display: grid;
    place-items: center;
    width: 39px;
    height: 37px;
    border-left: 1px solid #d9d9d9;
  }
`;

const Crumbs = styled.div`
  display: flex;
  align-items: center;
  gap: 9px;
  padding-left: 12px;
`;

const SearchBox = styled.div`
  display: flex;
  align-items: center;
  gap: 17px;
  width: 123px;
  margin-left: 12px;
  padding-left: 16px;
  border: 1px solid #d9d9d9;

  input {
    width: 71px;
    outline: 0;
  }
  input::placeholder {
    color: #6f6f6f;
    opacity: 1;
  }
`;

const Body = styled.main`
  display: flex;
  flex: 1;
`;

const Sidebar = styled.aside`
  display: flex;
  flex-direction: column;
  gap: 10px;
  width: 198px;
  padding: 20px 2px 0 0;
  border-right: 1px solid #f2f2f2;
`;

const Branch = styled.div`
  display: flex;
  flex-direction: column;
`;

const TreeItemStyled = styled.a`
  display: flex;
  align-items: center;
  height: 30px;
  padding-left: ${(p) => (p.$root ? 30 : 40)}px;
  padding-right: 4px;
  background: ${(p) => (p.$selected ? '#d9d9d9' : 'none')};
  color: #111;

  .icon {
    display: grid;
    place-items: center;
    width: 20px;
    margin-right: 5px;
  }
  .label {
    flex: 1;
    white-space: nowrap;
  }
`;

const Hidden = styled.span`
  width: 56px;
`;

const Files = styled.section`
  flex: 1;
`;

const FileTable = styled.table`
  table-layout: fixed;
  width: 836px;
  border-collapse: separate;
  border-spacing: 0;

  .name { width: 385px; }
  .date { width: 169px; }
  .type { width: 169px; }
  .size { width: 113px; }

  th, td {
    padding: 0 0 0 7px;
    font-weight: 400;
    text-align: left;
    white-space: nowrap;
  }
  th {
    position: relative;
    height: 32px;
    color: #4c607a;
    border-right: 1px solid #e3e3e3;
  }
  th:first-child {
    padding-left: 16px;
  }
  th label {
    display: flex;
    align-items: center;
    gap: 13px;
  }
  th input {
    appearance: none;
    width: 16px;
    height: 16px;
    margin: 0;
    border: 1px solid #222;
    background: #fff;
  }
  .sort {
    position: absolute;
    top: -1px;
    left: 195px;
  }
  tbody::before {
    content: "";
    display: block;
    height: 9px;
  }
`;

const FileRow = styled.tr`
  td {
    height: 27px;
    color: #6d6d6d;
  }
  td:first-child {
    padding-left: 46px;
    color: #111;
  }
  .file {
    display: flex;
    align-items: center;
    gap: 10px;
  }
  svg {
    margin-bottom: 3px;
    opacity: ${(p) => (p.$hidden ? 0.5 : 1)};
  }
`;

const StatusBar = styled.footer`
  display: flex;
  align-items: center;
  height: 29px;
  padding-right: 5px;
  color: #23395b;

  .count {
    width: 78px;
    margin-right: auto;
    padding-left: 17px;
    border-right: 1px solid #f0f0f0;
  }
`;

const ViewButton = styled.button`
  display: grid;
  place-items: center;
  width: 28px;
  height: 29px;
  background: ${(p) => (p.$on ? '#cbe8f6' : 'none')};
  border: ${(p) => (p.$on ? '1px solid #2e93bd' : '0')};
`;

const Taskbar = styled.nav`
  display: flex;
  height: 40px;
  color: #fff;
  background: linear-gradient(90deg,
    #594028 0%, #5a4324 15%, #57431c 22%, #573810 28%, #58461f 33%, #5f5028 38%, #5f461b 45%,
    #62532c 53%, #5c4719 62%, #5b4218 69%, #5a4a22 73%, #54451a 82%, #523a12 91%, #3a300f 100%);
`;

const TaskButton = styled.button`
  display: grid;
  place-items: center;
  width: ${(p) => p.$width}px;
  border-bottom: ${(p) => (p.$active ? '3px solid #ffe7a3' : '0')};
  padding-top: ${(p) => (p.$active ? 1 : 0)}px;
  background: ${(p) => (p.$active
    ? 'linear-gradient(90deg, #b08012 40px, #6f5312 40px, #6f5312 41px, #94700f 41px)'
    : p.$running ? 'linear-gradient(#ffe2a0, #ffe2a0) center bottom 2px / 35px 3px no-repeat' : 'none')};
`;

const Grip = styled.span`
  width: 4px;
  height: 24px;
  margin: 8px 13px 0 6px;
  border: solid #806b4d;
  border-width: 0 1px;
`;

const Tray = styled.div`
  display: flex;
  align-items: center;
  gap: 12px;
  margin-left: auto;
  padding-right: 25px;
  border-right: 1px solid #857a60;
  margin-right: 5px;

  time {
    margin: 0 16px 0 9px;
  }
`;

export default App;
